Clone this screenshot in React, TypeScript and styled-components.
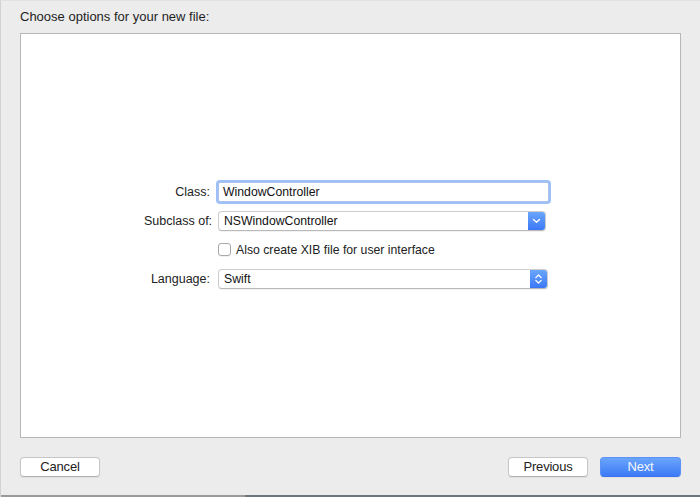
import React from 'react';
import styled, { createGlobalStyle } from 'styled-components';

const GlobalStyle = createGlobalStyle`
  html, body {
    margin: 0;
    padding: 0;
    background: #ececec;
  }
  * {
    box-sizing: border-box;
  }
`;

const Window = styled.div`
  width: 700px;
  height: 497px;
  display: flex;
  flex-direction: column;
  background: #ececec;
  border-left: 1px solid #d2d2d2;
  border-top: 1px solid #e2e2e2;
  font-family: "Liberation Sans", Arial, sans-serif;
  font-size: 12.5px;
  color: #222;
  overflow: hidden;
`;

const Title = styled.div`
  height: 16px;
  line-height: 16px;
  margin: 8px 0 8px 19px;
  font-size: 13px;
  color: #1e1e1e;
`;

const Panel = styled.div`
  height: 405px;
  margin: 0 19px 0 19px;
  background: #fff;
  border: 1px solid #b7b7b7;
  display: flex;
  align-items: center;
  justify-content: center;
  padding: 0 8px 1px 0;
`;

const Form = styled.div`
  display: grid;
  grid-template-columns: 66px 331px;
  grid-auto-rows: 20px;
  column-gap: 8px;
  row-gap: 9px;
  align-items: center;
`;

const Label = styled.label`
  text-align: right;
  white-space: nowrap;
  color: #222;
`;

const TextField = styled.div`
  height: 20px;
  padding: 0 4px;
  line-height: 18px;
  background: #fff;
  border: 1px solid #a9c3ee;
  border-radius: 2px;
  box-shadow: 0 0 0 2px #9fc0f6;
  color: #111;
  font-size: 12.25px;
`;

const Popup = styled.div<{ $width: number }>`
  width: ${p => p.$width}px;
  height: 20px;
  display: flex;
  align-items: stretch;
  background: #fff;
  border: 1px solid #cdcdcd;
  border-bottom-color: #b9b9b9;
  border-radius: 4px;
  box-shadow: 0 1px 1px rgba(0, 0, 0, 0.06);
  overflow: hidden;
`;

const PopupText = styled.span`
  flex: 1;
  padding-left: 5px;
  line-height: 18px;
  font-size: 12.25px;
  color: #111;
`;

const PopupArrow = styled.span`
  width: 17px;
  display: flex;
  align-items: center;
  justify-content: center;
  background: linear-gradient(#6aa6fb, #3c78f6);
`;

const CheckRow = styled.div`
  display: flex;
  align-items: center;
  gap: 5px;
  font-size: 12.25px;
  color: #222;
`;

const Box = styled.span`
  width: 13px;
  height: 13px;
  border: 1px solid #a8a8a8;
  border-radius: 3px;
  background: #fff;
  box-shadow: 0 1px 0 rgba(0, 0, 0, 0.05);
`;

const Footer = styled.div`
  display: flex;
  align-items: center;
  padding: 19px 19px 0 19px;
  gap: 12px;
`;

const Spacer = styled.div`
  flex: 1;
`;

const Button = styled.button<{ $primary?: boolean }>`
  width: ${p => (p.$primary ? 81 : 80)}px;
  height: 20px;
  padding: 0;
  border-radius: 4px;
  font-family: "Liberation Sans", Arial, sans-serif;
  font-size: 13px;
  letter-spacing: -0.2px;
  line-height: 18px;
  border: 1px solid ${p => (p.$primary ? '#5c92f8' : '#c6c6c6')};
  border-bottom-color: ${p => (p.$primary ? '#3d74ef' : '#b2b2b2')};
  background: ${p => (p.$primary ? 'linear-gradient(#6aa5fb, #3d7af6)' : '#fff')};
  color: ${p => (p.$primary ? '#f4f8ff' : '#222')};
  box-shadow: 0 1px 1px rgba(0, 0, 0, 0.06);
`;

const BottomEdge = styled.div`
  margin-top: auto;
  height: 2px;
  background: linear-gradient(90deg, #9a9a9a 0 244px, #6e7580 244px);
`;

const Chevron = () => (
  <svg width="9" height="6" viewBox="0 0 9 6">
    <path d="M1.5 1.5 L4.5 4.3 L7.5 1.5" fill="none" stroke="#fff" strokeWidth="1.3" strokeLinecap="round" strokeLinejoin="round" />
  </svg>
);

const UpDown = () => (
  <svg width="9" height="12" viewBox="0 0 9 12">
    <path d="M1.8 4.6 L4.5 2 L7.2 4.6 M1.8 7.4 L4.5 10 L7.2 7.4" fill="none" stroke="#fff" strokeWidth="1.3" strokeLinecap="round" strokeLinejoin="round" />
  </svg>
);

const App: React.FC = () => (
  <>
    <GlobalStyle />
    <Window>
      <Title>Choose options for your new file:</Title>
      <Panel>
        <Form>
          <Label>Class:</Label>
          <TextField>WindowController</TextField>
          <Label>Subclass of:</Label>
          <Popup $width={328}>
            <PopupText>NSWindowController</PopupText>
            <PopupArrow><Chevron /></PopupArrow>
          </Popup>
          <span />
          <CheckRow>
            <Box />
            Also create XIB file for user interface
          </CheckRow>
          <Label>Language:</Label>
          <Popup $width={330}>
            <PopupText>Swift</PopupText>
            <PopupArrow><UpDown /></PopupArrow>
          </Popup>
        </Form>
      </Panel>
      <Footer>
        <Button>Cancel</Button>
        <Spacer />
        <Button>Previous</Button>
        <Button $primary>Next</Button>
      </Footer>
      <BottomEdge />
    </Window>
  </>
);

export default App;
